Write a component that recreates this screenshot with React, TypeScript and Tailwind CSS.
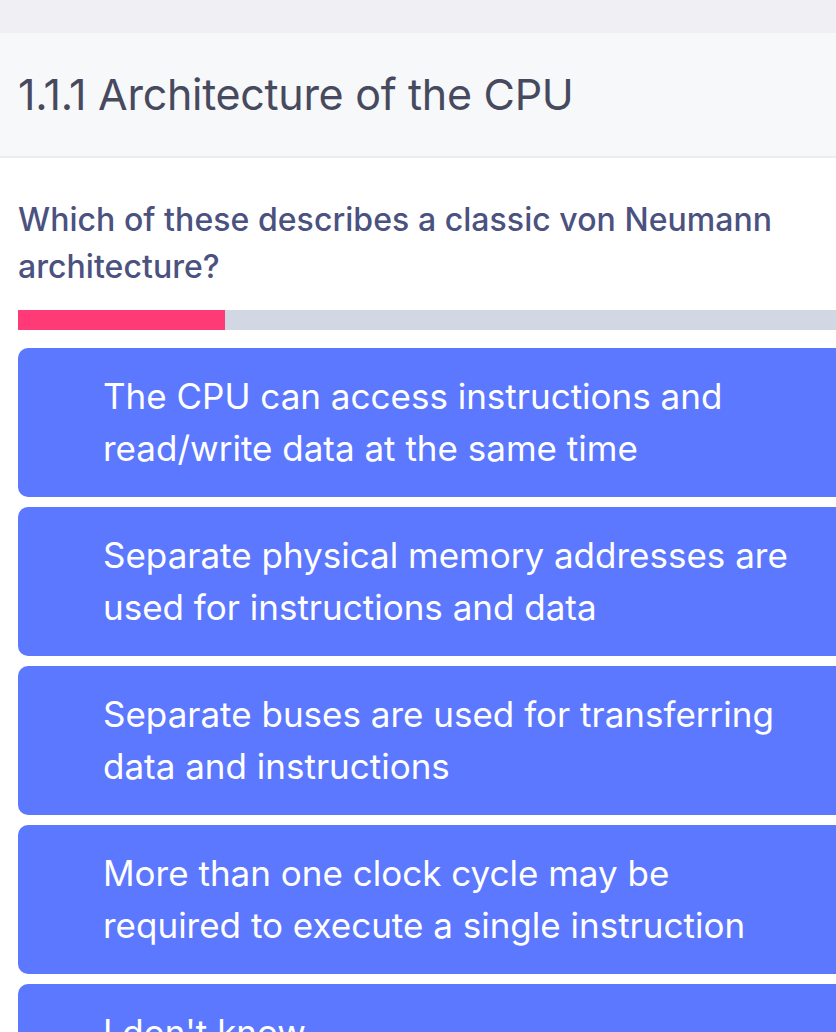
const options = [
  'The CPU can access instructions and read/write data at the same time',
  'Separate physical memory addresses are used for instructions and data',
  'Separate buses are used for transferring data and instructions',
  'More than one clock cycle may be required to execute a single instruction',
  "I don't know",
];

export default function App() {
  return (
    <div className="h-[1032px] overflow-hidden bg-white font-['Inter',sans-serif]">
      <div className="h-[33px] bg-[#efeff4]" />
      <header className="h-[125px] bg-[#f7f8fa] border-b-2 border-[#ececf1] flex items-center px-[18px]">
        <h1 className="text-[43px] leading-none text-[#474a5e] tracking-[-0.3px]">
          1.1.1 Architecture of the CPU
        </h1>
      </header>

      <main className="pl-[18px] pt-[38px]">
        <p className="text-[32px] leading-[47px] font-medium text-[#4b5280] tracking-[0.05px] pr-[40px]">
          Which of these describes a classic von Neumann architecture?
        </p>

        <div className="mt-[20px] h-[20px] bg-[#d2d8e3] flex">
          <div className="w-[207px] bg-[#ff3a77]" />
        </div>

        <div className="mt-[18px] flex flex-col gap-[10px] mr-[-60px]">
          {options.map((opt, i) => (
            <div
              key={i}
              className="bg-[#5c78ff] rounded-[10px] pl-[85px] pr-[96px] pt-[22px] pb-[23px] min-h-[149px] text-white text-[35px] leading-[52px] cursor-pointer"
            >
              {opt}
            </div>
          ))}
        </div>
      </main>
    </div>
  );
}
